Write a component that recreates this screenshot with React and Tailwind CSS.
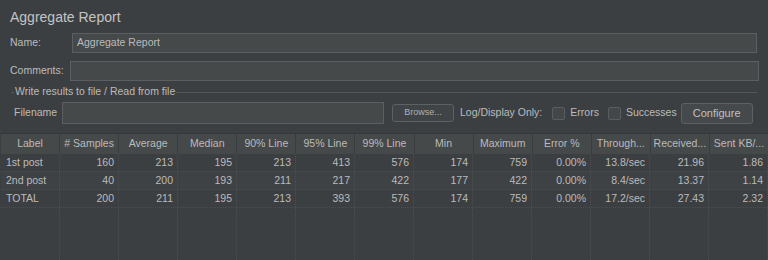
import React from 'react'

const columns = [
  'Label', '# Samples', 'Average', 'Median', '90% Line', '95% Line', '99% Line',
  'Min', 'Maximum', 'Error %', 'Through...', 'Received...', 'Sent KB/...'
]

const rows = [
  ['1st post', '160', '213', '195', '213', '413', '576', '174', '759', '0.00%', '13.8/sec', '21.96', '1.86'],
  ['2nd post', '40', '200', '193', '211', '217', '422', '177', '422', '0.00%', '8.4/sec', '13.37', '1.14'],
  ['TOTAL', '200', '211', '195', '213', '393', '576', '174', '759', '0.00%', '17.2/sec', '27.43', '2.32']
]

function Checkbox({ label }) {
  return (
    <label className="flex items-center gap-[5px]">
      <span className="w-[13px] h-[13px] rounded-[2px] border border-[#5b5e60] bg-[#43474a]" />
      <span>{label}</span>
    </label>
  )
}

export default function App() {
  return (
    <div
      className="w-[768px] h-[260px] overflow-hidden bg-[#3c3f41] text-[#bbbbbb] text-[10.5px] flex flex-col"
      style={{ fontFamily: '"Liberation Sans", Arial, sans-serif' }}
    >
      {/* titre */}
      <div className="h-[33px] pl-[10px] pt-[8px] text-[14px] leading-[18px] text-[#c4c4c4]">
        Aggregate Report
      </div>

      {/* Name */}
      <div className="flex items-center h-[20px] pl-[10px] pr-[11px]">
        <span className="w-[62px] shrink-0">Name:</span>
        <div className="flex-1 h-full flex items-center px-[4px] bg-[#45494a] border border-[#5c5f61]">
          Aggregate Report
        </div>
      </div>

      {/* Comments */}
      <div className="flex items-center h-[20px] mt-[8px] pl-[10px] pr-[9px]">
        <span className="w-[60px] shrink-0">Comments:</span>
        <div className="flex-1 h-full bg-[#45494a] border border-[#5c5f61]" />
      </div>

      {/* groupe fichier */}
      <div className="flex items-center h-[10px] mt-[6px] pl-[11px] pr-[11px]">
        <span className="w-[3px] h-px bg-[#55585a]" />
        <span className="px-[1px]">Write results to file / Read from file</span>
        <span className="flex-1 h-px bg-[#55585a]" />
      </div>

      <div className="flex items-center h-[22px] mt-[5px] pl-[14px]">
        <span className="w-[48px] shrink-0">Filename</span>
        <div className="w-[322px] h-full bg-[#45494a] border border-[#5c5f61]" />
        <button className="ml-[8px] w-[62px] h-[18px] text-[9px] rounded-[3px] border border-[#5e6163] bg-[#404446] text-[#b0b0b0]">
          Browse...
        </button>
        <span className="ml-[6px]">Log/Display Only:</span>
        <div className="ml-[10px]">
          <Checkbox label="Errors" />
        </div>
        <div className="ml-[9px]">
          <Checkbox label="Successes" />
        </div>
        <button className="ml-[4px] w-[72px] h-[21px] text-[11px] rounded-[3px] border border-[#5e6163] bg-[#45494b] text-[#c0c0c0]">
          Configure
        </button>
      </div>

      {/* tableau */}
      <div className="mt-[9px] ml-[1px] flex-1 flex flex-col">
        <div className="grid grid-cols-[repeat(13,minmax(0,1fr))] h-[21px] bg-[#3a3d3f] gap-x-px border-t border-[#36393b]">
          {columns.map(c => (
            <div key={c} className="bg-[#45494a] flex items-center justify-center whitespace-nowrap overflow-hidden">
              {c}
            </div>
          ))}
        </div>

        {rows.map((r, i) => (
          <div
            key={r[0]}
            className={`grid grid-cols-[repeat(13,minmax(0,1fr))] h-[18px] border-b border-dotted border-[#4b4e50] ${i === 1 ? 'bg-[#3f4244]' : 'bg-[#3c3f41]'}`}
          >
            {r.map((v, j) => (
              <div
                key={j}
                className={`flex items-center border-r border-dotted border-[#4b4e50] ${j === 0 ? 'pl-[5px] justify-start' : 'pr-[4px] justify-end'}`}
              >
                {v}
              </div>
            ))}
          </div>
        ))}

        <div className="flex-1 grid grid-cols-[repeat(13,minmax(0,1fr))]">
          {columns.map(c => (
            <div key={c} className="border-r border-dotted border-[#4b4e50]" />
          ))}
        </div>
      </div>
    </div>
  )
}
